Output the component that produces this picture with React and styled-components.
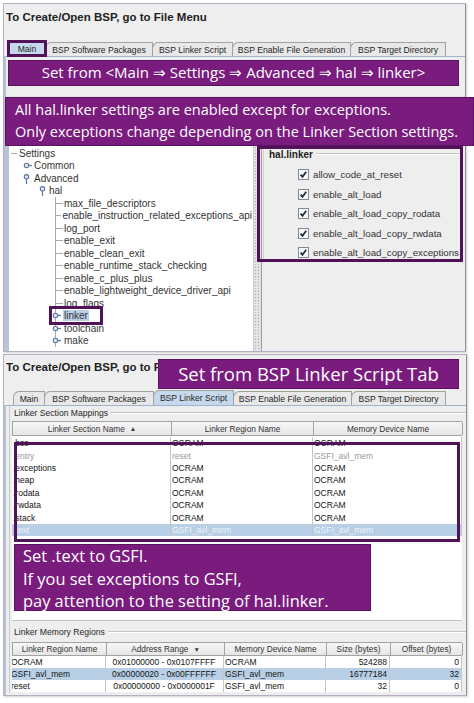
import React from "react";
import styled, { createGlobalStyle, css } from "styled-components";

const GlobalStyle = createGlobalStyle`
  html, body {
    margin: 0;
    padding: 0;
    background: #ffffff;
  }
  body {
    width: 474px;
    height: 703px;
    overflow: hidden;
    font-family: "Liberation Sans", Arial, sans-serif;
  }
  * {
    box-sizing: border-box;
  }
`;

const Page = styled.div`
  display: flex;
  flex-direction: column;
  gap: 2px;
  padding: 3px 0 0 3px;
  width: 474px;
  height: 703px;
`;

const Shot = styled.div`
  position: relative;
  display: flex;
  flex-direction: column;
  width: ${(p) => p.$w}px;
  height: ${(p) => p.$h}px;
  background: #eeeeee;
  border: 1px solid #b9adc2;
  border-right-color: #8f8f8f;
  box-shadow: 1px 1px 2px rgba(0, 0, 0, 0.18);
`;

const TitleRow = styled.div`
  display: flex;
  height: ${(p) => p.$h}px;
  flex-shrink: 0;
`;

const Title = styled.div`
  width: ${(p) => (p.$w ? `${p.$w}px` : "auto")};
  padding: ${(p) => p.$pt}px 0 0 2px;
  font-size: 11.5px;
  line-height: 13px;
  font-weight: bold;
  color: #1e1e1e;
  white-space: nowrap;
  overflow: hidden;
`;

const TabBar = styled.div`
  display: flex;
  align-items: flex-end;
  height: 15px;
  flex-shrink: 0;
  padding-left: ${(p) => p.$pl}px;
`;

const Tab = styled.div`
  position: relative;
  display: flex;
  align-items: center;
  justify-content: center;
  width: ${(p) => p.$w}px;
  height: ${(p) => (p.$active ? 15 : 14)}px;
  margin-right: -1px;
  font-size: 8.6px;
  color: #262626;
  white-space: nowrap;
  background: ${(p) => (p.$active ? "#c6d9ec" : "#e8e8e8")};
  border: 1px solid #a2a2a2;
  border-bottom: none;
  border-top-left-radius: 6px 7px;
  ${(p) =>
    p.$mark &&
    css`
      z-index: 2;
      outline: 3px solid #521259;
      outline-offset: -2px;
      border-radius: 0;
    `}
`;

const Pane = styled.div`
  flex: 1;
  min-height: 0;
  display: flex;
  flex-direction: column;
  border-top: 1px solid #9fb4ca;
  border-left: 2px solid #b3c4d6;
`;

const Banner = styled.div`
  flex-shrink: 0;
  position: relative;
  z-index: 3;
  width: ${(p) => p.$w}px;
  height: ${(p) => p.$h}px;
  margin: ${(p) => p.$m || "0"};
  padding: ${(p) => p.$pad || "0"};
  background: #7a1b7e;
  border: 1px solid #5a1160;
  color: #ffffff;
  font-family: "Open Sans", "Noto Sans", sans-serif;
  font-size: ${(p) => p.$fs}px;
  line-height: ${(p) => p.$lh}px;
  white-space: nowrap;
  text-align: ${(p) => (p.$center ? "center" : "left")};
`;

const Gap = styled.div`
  height: 11px;
  flex-shrink: 0;
  border-bottom: 1px solid #e2e2e2;
`;

const Split = styled.div`
  position: relative;
  flex: 1;
  min-height: 0;
  display: flex;
`;

const Tree = styled.div`
  width: 247px;
  flex-shrink: 0;
  background: #ffffff;
  border-left: 3px solid #b6c6d7;
  padding-top: 1px;
  overflow: hidden;
`;

const Row = styled.div`
  display: flex;
  align-items: center;
  height: 12.5px;
  padding-left: ${(p) => p.$x || 0}px;
  font-size: 10px;
  color: #333333;
  white-space: nowrap;
`;

const Tick = styled.span`
  display: inline-block;
  width: ${(p) => p.$w}px;
  margin-right: ${(p) => p.$gap}px;
  border-top: 1px solid #a9a9a9;
`;

const Children = styled.div`
  margin-left: 46px;
  margin-bottom: 6px;
  border-left: 1px solid #a9a9a9;
`;

const NodeWrap = styled.span`
  display: inline-flex;
  align-items: center;
  height: 13px;
  margin-left: -4px;
  padding-right: ${(p) => (p.$mark ? 11 : 0)}px;
  ${(p) =>
    p.$mark &&
    css`
      outline: 3px solid #521259;
      outline-offset: 0;
    `}
`;

const Label = styled.span`
  margin-left: ${(p) => p.$gap || 0}px;
  padding: 0 1px;
  background: ${(p) => (p.$sel ? "#b8cfe7" : "transparent")};
`;

const Splitter = styled.div`
  width: 9px;
  flex-shrink: 0;
  background-color: #e4e4e4;
  background-image: radial-gradient(#a9a9a9 0.6px, transparent 0.9px);
  background-size: 3px 3px;
  border-left: 1px solid #c9c9c9;
  border-right: 1px solid #9c9c9c;
`;

const Props = styled.div`
  flex: 1;
  padding: 1px 0 0 1px;
`;

const Group = styled.div`
  border-left: 1px solid #d0d0d0;
`;

const GroupTitle = styled.div`
  display: flex;
  align-items: center;
  height: 14px;
  padding-left: 5px;
  font-size: 10px;
  font-weight: bold;
  color: #1e1e1e;

  &::after {
    content: "";
    flex: 1;
    margin: 0 6px 0 3px;
    border-top: 1px solid #c3c3c3;
    border-bottom: 1px solid #ffffff;
  }
`;

const Checks = styled.div`
  padding-top: 4px;
`;

const CheckRow = styled.div`
  display: flex;
  align-items: center;
  gap: 4px;
  height: 19.5px;
  padding-left: 34px;
  font-size: 9.7px;
  color: #333333;
`;

const Mark = styled.div`
  position: absolute;
  z-index: 4;
  left: ${(p) => p.$l}px;
  top: ${(p) => p.$t}px;
  width: ${(p) => p.$w}px;
  height: ${(p) => p.$h}px;
  border: 3px solid #521259;
  pointer-events: none;
`;

const Section = styled.div`
  margin-left: 3px;
  border-left: 1px solid #cacaca;
  flex-shrink: 0;
`;

const SectionTitle = styled.div`
  display: flex;
  align-items: center;
  height: 12px;
  margin-top: ${(p) => p.$mt}px;
  padding-left: 4px;
  font-size: 8.6px;
  color: #262626;

  &::after {
    content: "";
    flex: 1;
    margin: 0 0 0 3px;
    border-top: 1px solid #c3c3c3;
    border-bottom: 1px solid #ffffff;
  }
`;

const Table = styled.div`
  width: 450px;
  margin: ${(p) => p.$mt}px 0 0 2px;
`;

const HeadRow = styled.div`
  display: grid;
  grid-template-columns: ${(p) => p.$cols};
  height: ${(p) => p.$h}px;
  border: 1px solid #a3a3a3;
  border-right: none;
  background: linear-gradient(#f7f7f7, #e6e6e6);
`;

const HeadCell = styled.div`
  display: flex;
  align-items: center;
  justify-content: center;
  gap: 5px;
  border-right: 1px solid #a3a3a3;
  font-size: 8.3px;
  color: #333333;
  white-space: nowrap;
  overflow: hidden;
`;

const Arrow = styled.span`
  font-size: 6.5px;
  color: #3a3a3a;
`;

const Body = styled.div`
  position: relative;
  height: ${(p) => (p.$h ? `${p.$h}px` : "auto")};
  padding-top: ${(p) => p.$pt || 0}px;
  background: #ffffff;
  border-bottom: ${(p) => (p.$h ? "1px solid #c0c0c0" : "none")};
`;

const DataRow = styled.div`
  display: grid;
  grid-template-columns: ${(p) => p.$cols};
  height: ${(p) => p.$h}px;
  background: ${(p) => (p.$sel ? "#b8cfe6" : "#ffffff")};
  color: ${(p) => (p.$dim ? "#9a9a9a" : p.$faded ? "#eef3f9" : "#141414")};
`;

const Cell = styled.div`
  display: flex;
  align-items: center;
  justify-content: ${(p) => p.$align || "flex-start"};
  padding: 0 2px 0 1px;
  border-right: 1px solid #c6c6c6;
  font-size: 8.5px;
  white-space: nowrap;
  overflow: hidden;
  text-indent: ${(p) => p.$indent || 0}px;
`;

const Handle = ({ open }) => (
  <svg width="9" height="11" viewBox="0 0 9 11">
    {open ? (
      <line x1="3.5" y1="4" x2="3.5" y2="11" stroke="#58779b" strokeWidth="1.2" />
    ) : (
      <line x1="4" y1="5.5" x2="9" y2="5.5" stroke="#58779b" strokeWidth="1.2" />
    )}
    <circle
      cx="3.5"
      cy={open ? 3.8 : 5.5}
      r="2.2"
      fill="#e2e9f2"
      stroke="#58779b"
      strokeWidth="1.1"
    />
  </svg>
);

const CheckBox = () => (
  <svg width="11" height="11" viewBox="0 0 11 11">
    <rect x="0.5" y="0.5" width="10" height="10" fill="#f7f8fa" stroke="#7c8c9e" />
    <path d="M2.6 5.6 L4.5 7.8 L8.2 2.8" fill="none" stroke="#1f2a36" strokeWidth="1.7" />
  </svg>
);

const TABS = [
  "Main",
  "BSP Software Packages",
  "BSP Linker Script",
  "BSP Enable File Generation",
  "BSP Target Directory",
];

const LEAVES = [
  "max_file_descriptors",
  "enable_instruction_related_exceptions_api",
  "log_port",
  "enable_exit",
  "enable_clean_exit",
  "enable_runtime_stack_checking",
  "enable_c_plus_plus",
  "enable_lightweight_device_driver_api",
  "log_flags",
];

const LINKER_OPTS = [
  "allow_code_at_reset",
  "enable_alt_load",
  "enable_alt_load_copy_rodata",
  "enable_alt_load_copy_rwdata",
  "enable_alt_load_copy_exceptions",
];

const SECTIONS = [
  [".bss", "OCRAM", "OCRAM"],
  [".entry", "reset", "GSFI_avl_mem", "dim"],
  [".exceptions", "OCRAM", "OCRAM"],
  [".heap", "OCRAM", "OCRAM"],
  [".rodata", "OCRAM", "OCRAM"],
  [".rwdata", "OCRAM", "OCRAM"],
  [".stack", "OCRAM", "OCRAM"],
  [".text", "GSFI_avl_mem", "GSFI_avl_mem", "sel"],
];

const REGIONS = [
  ["OCRAM", "0x01000000 - 0x0107FFFF", "OCRAM", "524288", "0"],
  ["GSFI_avl_mem", "0x00000020 - 0x00FFFFFF", "GSFI_avl_mem", "16777184", "32", "sel"],
  ["reset", "0x00000000 - 0x0000001F", "GSFI_avl_mem", "32", "0"],
];

const SEC_COLS = "159px 142px 149px";
const REG_COLS = "94px 118px 102px 64px 72px";

function Tabs({ widths, active, mark, pl }) {
  return (
    <TabBar $pl={pl}>
      {TABS.map((t, i) => (
        <Tab key={t} $w={widths[i]} $active={i === active} $mark={i === mark}>
          {t}
        </Tab>
      ))}
    </TabBar>
  );
}

function MainShot() {
  return (
    <Shot $w={463} $h={349}>
      <TitleRow $h={37}>
        <Title $pt={7}>To Create/Open BSP, go to File Menu</Title>
      </TitleRow>
      <Tabs widths={[38, 108, 81, 119, 96]} active={0} mark={0} pl={4} />
      <Pane>
        <Banner $w={451} $h={26} $m="3px 0 0 2px" $fs={15} $lh={23} $center>
          Set from &lt;Main ⇒ Settings ⇒ Advanced ⇒ hal ⇒ linker&gt;
        </Banner>
        <Gap />
        <Banner $w={469} $h={49} $m="0 0 0 -1px" $pad="1px 0 0 9px" $fs={14.5} $lh={22}>
          All hal.linker settings are enabled except for exceptions.
          <br />
          Only exceptions change depending on the Linker Section settings.
        </Banner>
        <Split>
          <Tree>
            <Row $x={2}>
              <Tick $w={6} $gap={2} />
              Settings
            </Row>
            <Row $x={14}>
              <Handle />
              <Label $gap={1}>Common</Label>
            </Row>
            <Row $x={14}>
              <Handle open />
              <Label $gap={1}>Advanced</Label>
            </Row>
            <Row $x={30}>
              <Handle open />
              <Label $gap={0}>hal</Label>
            </Row>
            <Children>
              {LEAVES.map((l) => (
                <Row key={l}>
                  <Tick $w={7} $gap={0} />
                  <Label>{l}</Label>
                </Row>
              ))}
              {["linker", "toolchain", "make"].map((n) => (
                <Row key={n}>
                  <NodeWrap $mark={n === "linker"}>
                    <Handle />
                    <Label $gap={2} $sel={n === "linker"}>
                      {n}
                    </Label>
                  </NodeWrap>
                </Row>
              ))}
            </Children>
          </Tree>
          <Splitter />
          <Props>
            <Group>
              <GroupTitle>hal.linker</GroupTitle>
              <Checks>
                {LINKER_OPTS.map((o) => (
                  <CheckRow key={o}>
                    <CheckBox />
                    {o}
                  </CheckRow>
                ))}
              </Checks>
            </Group>
          </Props>
          <Mark $l={251} $t={0} $w={206} $h={116} />
        </Split>
      </Pane>
    </Shot>
  );
}

function LinkerShot() {
  return (
    <Shot $w={464} $h={342}>
      <TitleRow $h={35}>
        <Title $w={154} $pt={6}>
          To Create/Open BSP, go to File Menu
        </Title>
        <Banner $w={301} $h={30} $m="4px 0 0 0" $fs={18.5} $lh={27} $center>
          Set from BSP Linker Script Tab
        </Banner>
      </TitleRow>
      <Tabs widths={[32, 110, 81, 119, 95]} active={2} pl={9} />
      <Pane>
        <Section>
          <SectionTitle $mt={1}>Linker Section Mappings</SectionTitle>
          <Table $mt={2}>
            <HeadRow $cols={SEC_COLS} $h={15}>
              <HeadCell>
                Linker Section Name <Arrow>▲</Arrow>
              </HeadCell>
              <HeadCell>Linker Region Name</HeadCell>
              <HeadCell>Memory Device Name</HeadCell>
            </HeadRow>
            <Body $h={185} $pt={1}>
              {SECTIONS.map(([a, b, c, st]) => (
                <DataRow
                  key={a}
                  $cols={SEC_COLS}
                  $h={12.4}
                  $sel={st === "sel"}
                  $faded={st === "sel"}
                  $dim={st === "dim"}
                >
                  <Cell>{a}</Cell>
                  <Cell>{b}</Cell>
                  <Cell>{c}</Cell>
                </DataRow>
              ))}
              <Banner $w={357} $h={67} $m="8px 0 0 2px" $pad="0 0 0 8px" $fs={16.4} $lh={22.5}>
                Set .text to GSFI.
                <br />
                If you set exceptions to GSFI,
                <br />
                pay attention to the setting of hal.linker.
              </Banner>
              <Mark $l={2} $t={6} $w={446} $h={100} />
            </Body>
          </Table>
          <SectionTitle $mt={5}>Linker Memory Regions</SectionTitle>
          <Table $mt={4}>
            <HeadRow $cols={REG_COLS} $h={14}>
              <HeadCell>Linker Region Name</HeadCell>
              <HeadCell>
                Address Range <Arrow>▼</Arrow>
              </HeadCell>
              <HeadCell>Memory Device Name</HeadCell>
              <HeadCell>Size (bytes)</HeadCell>
              <HeadCell>Offset (bytes)</HeadCell>
            </HeadRow>
            <Body>
              {REGIONS.map(([a, b, c, d, e, st]) => (
                <DataRow key={a} $cols={REG_COLS} $h={12} $sel={st === "sel"}>
                  <Cell $indent={-2}>{a}</Cell>
                  <Cell $align="center">{b}</Cell>
                  <Cell>{c}</Cell>
                  <Cell $align="flex-end">{d}</Cell>
                  <Cell $align="flex-end">{e}</Cell>
                </DataRow>
              ))}
            </Body>
          </Table>
        </Section>
      </Pane>
    </Shot>
  );
}

export default function App() {
  return (
    <>
      <GlobalStyle />
      <Page>
        <MainShot />
        <LinkerShot />
      </Page>
    </>
  );
}
